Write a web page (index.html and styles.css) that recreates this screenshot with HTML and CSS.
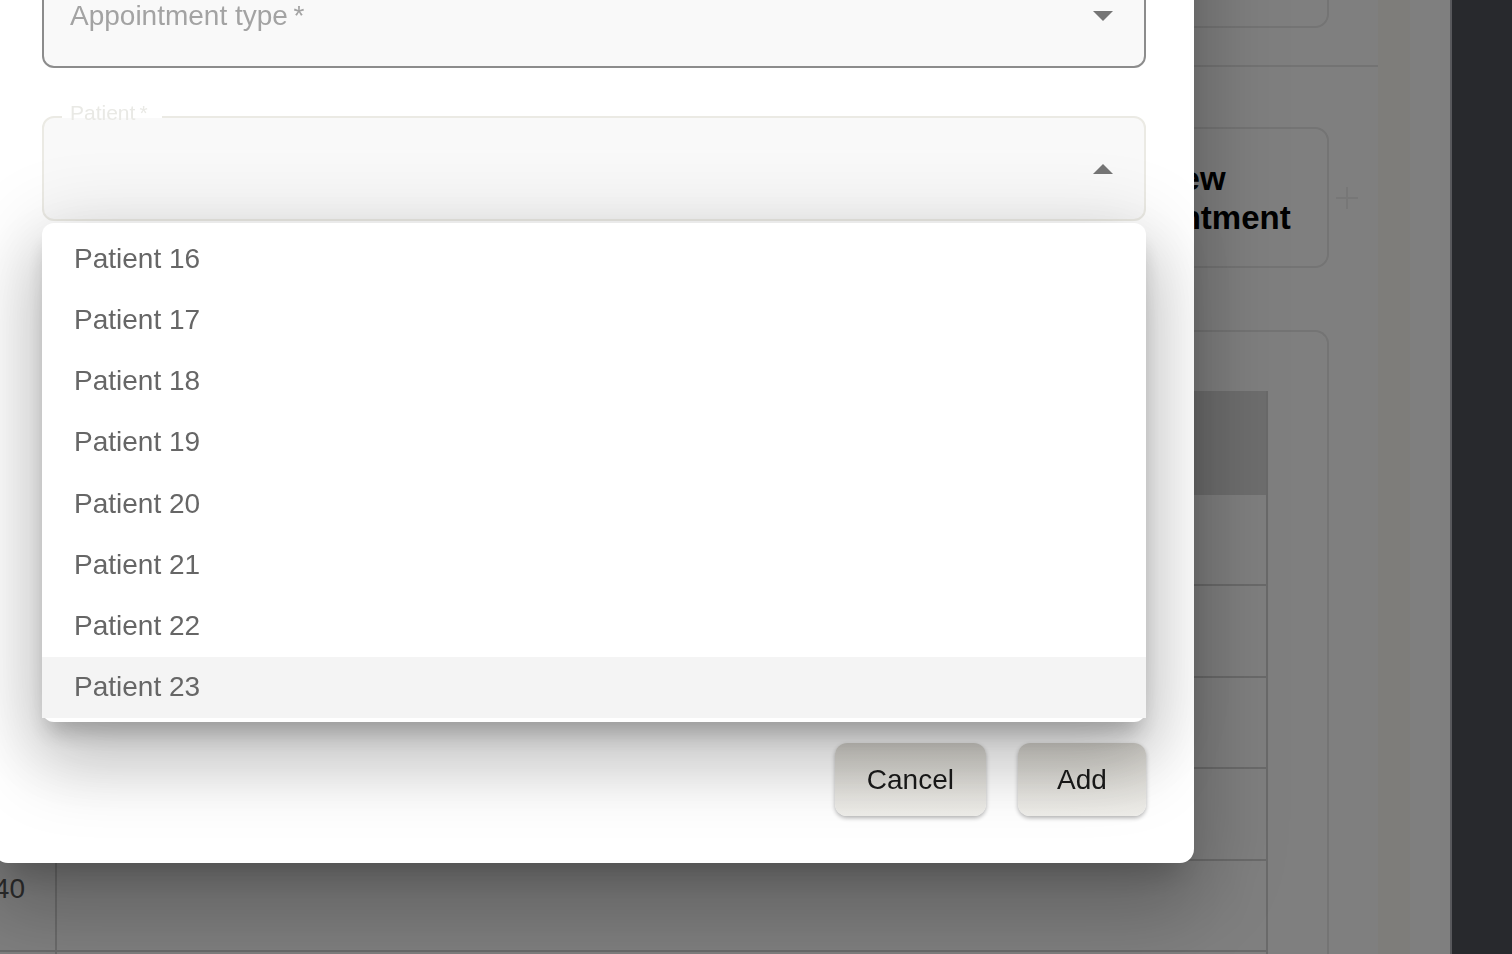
FILE: index.html
```html
<!DOCTYPE html>
<html lang="en">
<head>
<meta charset="utf-8">
<title>Appointments</title>
<link rel="stylesheet" href="styles.css">
</head>
<body>
<div class="app">
  <div class="main">
    <div class="content">
      <div class="top-card"></div>
      <div class="divider"></div>
      <div class="slot-row">
        <div class="slots">
          <div class="slot"></div>
          <div class="slot"></div>
          <div class="slot"></div>
          <div class="slot"></div>
          <div class="slot">New appointment</div>
        </div>
        <div class="add-btn">
          <svg width="24" height="24" viewBox="0 0 24 24"><path d="M12 1v22M1 12h22" stroke="#efefef" stroke-width="2" fill="none"/></svg>
        </div>
      </div>
      <div class="schedule">
        <div class="table">
          <div class="thead"><div class="tcell-time"></div><div class="tcell"></div></div>
          <div class="trow"><div class="tcell-time">10:00</div><div class="tcell"></div></div>
          <div class="trow"><div class="tcell-time">10:10</div><div class="tcell"></div></div>
          <div class="trow"><div class="tcell-time">10:20</div><div class="tcell"></div></div>
          <div class="trow"><div class="tcell-time">10:30</div><div class="tcell"></div></div>
          <div class="trow"><div class="tcell-time">10:40</div><div class="tcell"></div></div>
          <div class="trow"><div class="tcell-time">10:50</div><div class="tcell"></div></div>
        </div>
      </div>
    </div>
    <div class="rail"><div class="rail-warm"></div></div>
  </div>
  <div class="sidebar"></div>
</div>

<div class="backdrop"></div>

<div class="dialog">
  <h2 class="dialog-title">New appointment</h2>
  <div class="field">
    <span class="placeholder">Appointment type&thinsp;*</span>
    <svg class="arrow" width="20" height="10" viewBox="0 0 20 10"><path d="M0 0h20L10 10z" fill="#757575"/></svg>
  </div>
  <div class="field open">
    <span class="legend">Patient&thinsp;*</span>
    <svg class="arrow" width="20" height="10" viewBox="0 0 20 10"><path d="M0 10h20L10 0z" fill="#757575"/></svg>
    <ul class="menu">
      <li class="option">Patient 16</li>
      <li class="option">Patient 17</li>
      <li class="option">Patient 18</li>
      <li class="option">Patient 19</li>
      <li class="option">Patient 20</li>
      <li class="option">Patient 21</li>
      <li class="option">Patient 22</li>
      <li class="option active">Patient 23</li>
    </ul>
  </div>
  <div class="field"><span class="placeholder">Date&thinsp;*</span></div>
  <div class="field"><span class="placeholder">Time&thinsp;*</span></div>
  <div class="field"><span class="placeholder">Notes</span></div>
  <div class="actions">
    <button class="btn">Cancel</button>
    <button class="btn">Add</button>
  </div>
</div>
</body>
</html>
```

FILE: styles.css
```css
* { box-sizing: border-box; }
html, body { margin: 0; height: 100%; overflow: hidden; }
body {
  font-family: "Liberation Sans", Arial, Helvetica, sans-serif;
  background: #fff;
}

/* background page */
.app { display: flex; width: 1512px; height: 954px; overflow: hidden; }
.main {
  display: flex;
  width: 1452px;
  flex: none;
  border-right: 2px solid #b0b0b8;
  background: #fff;
}
.content {
  flex: none;
  width: 1518px;
  margin-left: -140px;
  display: flex;
  flex-direction: column;
  overflow: hidden;
}
.content > * { flex-shrink: 0; }
.rail { flex: none; width: 72px; display: flex; }
.rail-warm { width: 32px; background: #fcfaf4; }
.sidebar { flex: 1; background: #50525a; }

.top-card {
  margin: -72px 49px 0 0;
  height: 100px;
  border: 2px solid #e8e8e8;
  border-radius: 14px;
}
.divider { margin-top: 37px; height: 2px; background: #e6e6e6; }

.slot-row {
  margin-top: 60px;
  height: 141px;
  display: flex;
  padding-right: 13px;
}
.slots { flex: 1; display: flex; gap: 24px; }
.slot {
  flex: 1;
  border: 2px solid #e8e8e8;
  border-radius: 14px;
  display: flex;
  align-items: center;
  justify-content: center;
  text-align: center;
  padding: 0 24px;
  font-size: 33px;
  line-height: 39px;
  font-weight: 700;
  color: #000;
}
.add-btn { width: 36px; display: flex; align-items: center; justify-content: center; }

.schedule {
  flex: 1 0 auto;
  margin: 62px 49px 0 0;
  border: 2px solid #e8e8e8;
  border-bottom: none;
  border-radius: 14px 14px 0 0;
  padding: 59px 59px 0 59px;
}
.table { border-right: 2px solid #d4d4d4; }
.thead { height: 104px; background: #dcdcdc; display: flex; }
.trow {
  height: 91.4px;
  border-bottom: 2px solid #d4d4d4;
  display: flex;
}
.tcell-time {
  width: 136px;
  flex: none;
  border-right: 2px solid #d4d4d4;
  text-align: right;
  padding: 12px 30px 0 0;
  font-size: 28px;
  line-height: 32px;
  color: #585858;
}
.thead .tcell-time { border-right: none; }
.tcell { flex: 1; }

/* overlay */
.backdrop {
  position: fixed;
  inset: 0;
  background: rgba(0, 0, 0, 0.5);
  z-index: 5;
}

.dialog {
  position: fixed;
  left: -6px;
  bottom: 91px;
  width: 1200px;
  z-index: 10;
  background: #fff;
  border-radius: 14px;
  padding: 48px 48px 47px;
  display: flex;
  flex-direction: column;
  gap: 48px;
  box-shadow:
    0 22px 30px -14px rgba(0, 0, 0, 0.2),
    0 48px 76px 6px rgba(0, 0, 0, 0.14),
    0 18px 92px 16px rgba(0, 0, 0, 0.12);
}
.dialog-title { margin: 0; font-size: 40px; font-weight: 500; color: #1a1a1a; }

.field {
  position: relative;
  height: 105px;
  flex: none;
  border: 2px solid #8c8c8c;
  border-radius: 12px;
  background: #f9f9f9;
  display: flex;
  align-items: center;
  justify-content: space-between;
  padding: 0 31px 0 26px;
}
.placeholder { font-size: 28px; color: #a3a3a3; }
.arrow { display: block; flex: none; margin-left: auto; }

.field.open { border-color: #ebeae4; }
.legend {
  position: absolute;
  left: 18px;
  top: -17px;
  padding: 0 14px 0 8px;
  font-size: 21px;
  line-height: 24px;
  color: #e9e9e5;
  background: linear-gradient(to bottom, #fff 0, #fff 17px, transparent 17px);
}

.menu {
  position: absolute;
  left: -2px;
  right: -2px;
  top: calc(100% + 4px);
  margin: 0;
  padding: 5px 0 4px;
  list-style: none;
  background: #fff;
  border-radius: 12px;
  z-index: 5;
  box-shadow:
    0 16px 22px -6px rgba(0, 0, 0, 0.22),
    0 40px 70px 8px rgba(0, 0, 0, 0.17),
    0 14px 80px 14px rgba(0, 0, 0, 0.12);
}
.option {
  height: 61.25px;
  display: flex;
  align-items: center;
  padding-left: 32px;
  font-size: 28px;
  color: #666;
}
.option.active { background: #f4f4f4; }

.actions {
  display: flex;
  justify-content: flex-end;
  gap: 32px;
  margin-top: 15px;
}
.btn {
  height: 73px;
  min-width: 128px;
  padding: 0 32px;
  border: none;
  border-radius: 12px;
  background: linear-gradient(to bottom, #d3d1cb, #efeeea);
  box-shadow: 0 2px 4px rgba(0, 0, 0, 0.3);
  font-family: "Liberation Sans", Arial, Helvetica, sans-serif;
  font-size: 28px;
  color: #1a1a1a;
}
```
